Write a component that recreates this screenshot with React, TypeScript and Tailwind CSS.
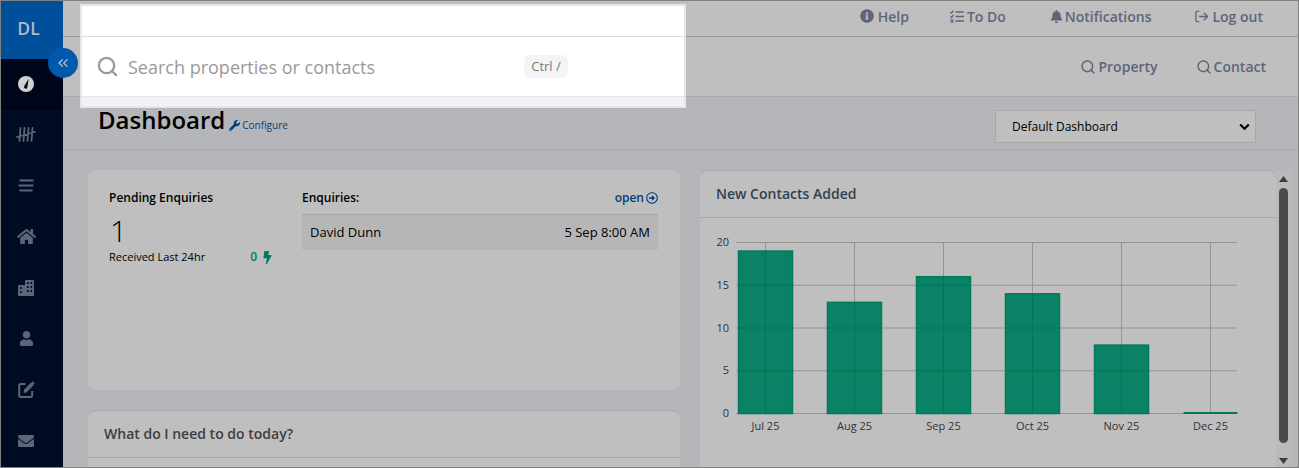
import React from "react";
import { FaInfoCircle, FaBell, FaHome, FaUser, FaEnvelope, FaBolt, FaWrench, FaRegArrowAltCircleRight } from "react-icons/fa";
import { Search, ChevronsLeft } from "lucide-react";

const bars = [
  { label: "Jul 25", v: 19 },
  { label: "Aug 25", v: 13 },
  { label: "Sep 25", v: 16 },
  { label: "Oct 25", v: 14 },
  { label: "Nov 25", v: 8 },
  { label: "Dec 25", v: 0 },
];

function Chart() {
  const left = 36, right = 537, top = 24, bottom = 195, slot = 89;
  const y = (v: number) => bottom - (v / 20) * (bottom - top);
  const ticks = [20, 15, 10, 5, 0];
  return (
    <svg width="560" height="230" className="block" style={{ fontFamily: "'Open Sans', sans-serif" }}>
      {ticks.map((v) => (
        <g key={v}>
          <line x1={left} x2={right} y1={y(v) + 0.5} y2={y(v) + 0.5} stroke="#949494" />
          <text x={29} y={y(v) + 4} textAnchor="end" fontSize="11" fill="#333">{v}</text>
        </g>
      ))}
      {bars.map((b, i) => {
        const cx = left + 29 + i * slot;
        return <line key={b.label} x1={cx + 0.5} x2={cx + 0.5} y1={top} y2={bottom} stroke="#949494" />;
      })}
      {bars.map((b, i) => {
        const cx = left + 29.5 + i * slot;
        if (b.v === 0)
          return <rect key={b.label} x={cx - 27} y={bottom - 1} width={54} height={2} fill="#007a5a" />;
        return (
          <g key={b.label}>
            <rect x={cx - 27} y={y(b.v) + 0.5} width={54} height={bottom - y(b.v)} fill="#0a8266" stroke="#007a5a" strokeWidth="1.5" />
            <line x1={cx} x2={cx} y1={y(b.v) + 1} y2={bottom} stroke="#007458" />
            {ticks.filter((t) => t > 0 && t < b.v).map((t) => (
              <line key={t} x1={cx - 26} x2={cx + 26} y1={y(t) + 0.5} y2={y(t) + 0.5} stroke="#007458" />
            ))}
          </g>
        );
      })}
      {bars.map((b, i) => (
        <text key={b.label} x={left + 29.5 + i * slot} y={212} textAnchor="middle" fontSize="11" fill="#333">{b.label}</text>
      ))}
    </svg>
  );
}

function Tally() {
  return (
    <svg width="20" height="15" viewBox="0 0 20 15" fill="none" stroke="#5d6679" strokeWidth="1.8" strokeLinecap="round">
      <path d="M4.5 1L3.5 14M8.5 1L7.5 14M12.5 1L11.5 14M16.5 1L15.5 14M1 10l18-5" />
    </svg>
  );
}

function Gauge() {
  return (
    <svg width="16" height="16" viewBox="0 0 16 16">
      <circle cx="8" cy="8" r="8" fill="#d0d0d0" />
      <path d="M6.3 10 L10.6 2.8 L9.4 11.2 A1.7 1.7 0 1 1 6.3 10Z" fill="#000b24" />
    </svg>
  );
}

function Bars() {
  return (
    <svg width="16" height="13" viewBox="0 0 16 13" fill="none" stroke="#5d6679" strokeWidth="2">
      <path d="M1.5 1.5h14M0.5 6.5h15M1.5 11.5h13" />
    </svg>
  );
}

function City() {
  return (
    <svg width="16" height="16" viewBox="0 0 16 16">
      <path d="M7 1a1 1 0 0 1 1-1h7a1 1 0 0 1 1 1v15H1a1 1 0 0 1-1-1V6a1 1 0 0 1 1-1h6z" fill="#5d6679" />
      <g fill="#000b24">
        <rect x="9" y="2" width="1.6" height="2" />
        <rect x="12.5" y="2" width="1.6" height="2" />
        <rect x="9" y="6" width="1.6" height="2" />
        <rect x="12.5" y="6" width="1.6" height="2" />
        <rect x="9" y="10" width="1.6" height="2" />
        <rect x="12.5" y="10" width="1.6" height="2" />
        <rect x="2" y="7" width="1.6" height="2" />
        <rect x="2" y="11" width="1.6" height="2" />
      </g>
    </svg>
  );
}

function Edit() {
  return (
    <svg width="17" height="17" viewBox="0 0 17 17">
      <path d="M7.5 3H3a1.8 1.8 0 0 0-1.8 1.8v9.4A1.8 1.8 0 0 0 3 16h9.4a1.8 1.8 0 0 0 1.8-1.8V10" fill="none" stroke="#5d6679" strokeWidth="2" />
      <path d="M6 8.8 13 1.6l2.6 2.6-7.1 7.2-3 .5zM14 .8a1 1 0 0 1 1.3 0l1 1a1 1 0 0 1 0 1.3l-.7.6-2.3-2.3z" fill="#5d6679" />
    </svg>
  );
}

function Todo() {
  return (
    <svg width="14" height="13" viewBox="0 0 14 13" fill="none" stroke="#5d6679" strokeWidth="1.3">
      <path d="M5.5 2h8.5M5.5 6.5h8.5M5.5 11h8.5M0.5 2l1 1 2-2.5M0.5 6.5l1 1 2-2.5M0.5 10h3M0.5 12h3" />
    </svg>
  );
}

function Logout() {
  return (
    <svg width="13" height="13" viewBox="0 0 14 13" fill="none" stroke="#5d6679" strokeWidth="1.4">
      <path d="M4.5 1H2a1 1 0 0 0-1 1v9a1 1 0 0 0 1 1h2.5M4.5 6.5H13M9.5 2.5l4 4-4 4" />
    </svg>
  );
}

function SideItem({ children, active }: { children: React.ReactNode; active?: boolean }) {
  return (
    <div className={`h-[51px] pr-[12px] pb-[2px] flex items-center justify-center text-[#5d6679] ${active ? "bg-[#00061a]" : ""}`}>
      {children}
    </div>
  );
}

function Overlay() {
  return (
    <div className="absolute left-[79px] top-[3px] w-[606px] h-[104px] border-[2px] border-[#e6e6e6] bg-white flex flex-col">
      <div className="h-[31px] border-b border-[#dcdcdc]" />
      <div className="h-[60px] border-b border-[#e6e6e6] flex items-center pl-[14px]">
        <Search size={23} strokeWidth={2.4} className="text-[#999]" />
        <span className="ml-[9px] pt-[2px] text-[18px] text-[#9a9a9a] w-[396px]">Search properties or contacts</span>
        <span className="h-[23px] w-[44px] rounded-[6px] bg-[#f3f4f8] text-[13px] text-[#777] flex items-center justify-center">Ctrl /</span>
      </div>
      <div className="flex-1 bg-[#f2f3f8]" />
    </div>
  );
}

export default function App() {
  return (
    <div className="relative w-[1299px] h-[468px] overflow-hidden border border-[#808080] bg-[#b5b6ba] flex font-['Open_Sans',sans-serif]">
      <aside className="w-[62px] shrink-0 bg-[#000b24] flex flex-col">
        <div className="h-[58px] pr-[7px] pb-[3px] bg-[#004f9b] flex items-center justify-center text-[#b5b9c0] text-[17.5px] font-semibold">DL</div>
        <SideItem active><Gauge /></SideItem>
        <SideItem><Tally /></SideItem>
        <SideItem><Bars /></SideItem>
        <SideItem><FaHome size={19} /></SideItem>
        <SideItem><City /></SideItem>
        <SideItem><FaUser size={15} /></SideItem>
        <SideItem><Edit /></SideItem>
        <SideItem><FaEnvelope size={16} /></SideItem>
      </aside>

      <main className="flex-1 min-w-0 flex flex-col">
        <div className="h-[36px] pb-[5px] bg-[#bfbfbf] border-b border-[#9a9a9a] flex items-center justify-end text-[14px] font-semibold text-[#5d6679] pr-[35px]">
          <span className="flex items-center gap-[4px]"><FaInfoCircle size={14} />Help</span>
          <span className="flex items-center gap-[3px] ml-[41px]"><Todo />To Do</span>
          <span className="flex items-center gap-[2px] ml-[44px]"><FaBell size={13} />Notifications</span>
          <span className="flex items-center gap-[4px] ml-[44px]"><Logout />Log out</span>
        </div>
        <div className="h-[60px] bg-[#bfbfbf] border-b border-[#a8a8a8] flex items-center justify-end text-[14px] font-semibold text-[#5d6679] pr-[32px]">
          <span className="flex items-center gap-[2px]"><Search size={16} strokeWidth={2.2} />Property</span>
          <span className="flex items-center gap-[2px] ml-[38px]"><Search size={16} strokeWidth={2.2} />Contact</span>
        </div>
        <div className="h-[53px] border-b border-[#a8a8a8] flex items-start justify-between pl-[35px] pr-[42px] text-black">
          <div className="flex items-center mt-[6px]">
            <span className="text-[24px] font-semibold leading-[33px]">Dashboard</span>
            <span className="ml-[4px] mt-[11px] flex items-center gap-[2px] text-[10px] text-[#00407c]"><FaWrench size={11} />Configure</span>
          </div>
          <div className="mt-[13px] w-[261px] h-[33px] border border-[#a8a8a8] bg-[#bfbfbf] flex items-center justify-between pl-[16px] pr-[5px] text-[12px] text-black">
            <span className="pt-[1px]">Default Dashboard</span>
            <svg width="11" height="8" viewBox="0 0 11 8" fill="none" stroke="#000" strokeWidth="2.2"><path d="M1.2 1.5l4.3 4.3 4.3-4.3" /></svg>
          </div>
        </div>

        <div className="flex-1 min-h-0 flex pl-[25px] pt-[20px] gap-[20px] overflow-hidden">
          <div className="w-[592px] shrink-0 flex flex-col gap-[20px]">
            <section className="h-[220px] shrink-0 rounded-[8px] bg-[#bfbfbf] flex pl-[21px] pr-[22px] pt-[20px] text-black">
              <div className="w-[193px] shrink-0">
                <div className="text-[12px] font-semibold leading-[16px]">Pending Enquiries</div>
                <div className="text-[30px] font-light leading-[36px] mt-[7px] ml-[1px]">1</div>
                <div className="flex items-center justify-between pr-[28px] text-[11px] leading-[14px] mt-[1px]">
                  <span>Received Last 24hr</span>
                  <span className="flex items-center gap-[4px] text-[#007a5a] text-[12px] font-semibold">0<FaBolt size={13} /></span>
                </div>
              </div>
              <div className="flex-1 min-w-0">
                <div className="flex items-center justify-between h-[17px] pb-[1px] text-[12px]">
                  <span className="font-semibold">Enquiries:</span>
                  <span className="flex items-center gap-[2px] font-semibold text-[#00407c]">open<FaRegArrowAltCircleRight size={12} /></span>
                </div>
                <div className="mt-[7px] h-[36px] pt-[1px] border-t border-[#a8a8a8] bg-[#b6b6b6] flex items-center justify-between px-[8px] text-[13px]">
                  <span>David Dunn</span>
                  <span>5 Sep 8:00 AM</span>
                </div>
              </div>
            </section>
            <section className="flex-1 rounded-t-[8px] bg-[#bfbfbf] border-t border-[#a8a8a8]">
              <div className="h-[47px] pb-[2px] border-b border-[#a8a8a8] pl-[16px] flex items-center text-[14px] font-semibold text-[#3d3d3d]">What do I need to do today?</div>
            </section>
          </div>
          <section className="w-[576px] shrink-0 h-[298px] rounded-t-[8px] bg-[#bfbfbf] border-t border-[#a8a8a8] flex flex-col">
            <div className="h-[47px] pb-[2px] shrink-0 border-b border-[#a8a8a8] pl-[16px] flex items-center text-[14px] font-semibold text-[#333f50]">New Contacts Added</div>
            <Chart />
          </section>
          <div className="w-[15px] ml-[-20px] shrink-0 flex flex-col items-center bg-[#bababa] h-[298px] pt-[6px]">
            <svg width="9" height="6" viewBox="0 0 9 6" className="fill-[#3c3c3c]"><path d="M4.5 0L9 6H0z" /></svg>
            <div className="w-[9px] h-[255px] mt-[6px] rounded-full bg-[#4a4a4a]" />
            <svg width="9" height="6" viewBox="0 0 9 6" className="fill-[#3c3c3c] mt-[15px]"><path d="M0 0h9L4.5 6z" /></svg>
          </div>
        </div>
      </main>

      <div className="absolute left-[47px] top-[47px] w-[30px] h-[30px] rounded-full bg-[#0059ad] flex items-center justify-center text-[#a9bfd8]">
        <ChevronsLeft size={16} strokeWidth={2} />
      </div>
      <Overlay />
    </div>
  );
}
